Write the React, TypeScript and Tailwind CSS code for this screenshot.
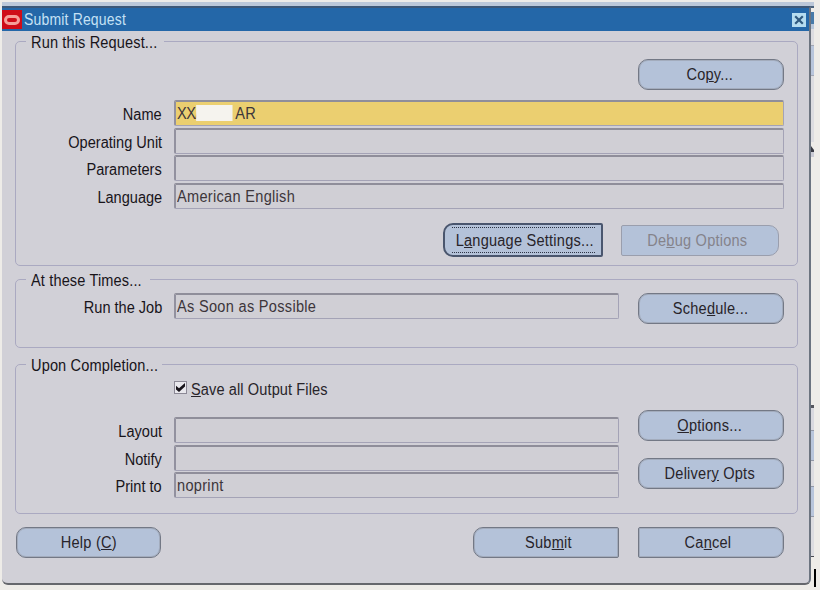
import clsx from "clsx"
import { type ReactNode } from "react"

export default function App() {
  return (
    <div className="flex h-[590px] w-[820px] overflow-hidden bg-[#eeece8] pl-[2px] font-['Liberation_Sans',Arial,sans-serif] text-[16px] leading-[20px] text-[#28242a]">
      <div className="flex w-[809px] flex-col">
        {/* Edge of the parent window above the dialog */}
        <div className="mt-[2px] h-[4px] bg-[#bcc8d9]" />
        <div className="flex h-[579px] flex-col rounded-b-[6px] border-t-2 border-r-2 border-b-2 border-t-[#3d5878] border-r-[#6c7480] border-b-[#65676c] bg-[#d1d0d7]">
          <TitleBar />
          <div className="flex flex-col pr-[11px] pl-[13px]">
            <RequestGroup />
            <TimesGroup />
            <CompletionGroup />
            <Footer />
          </div>
        </div>
      </div>
      <BackgroundStrip />
    </div>
  )
}

function TitleBar() {
  return (
    <div className="flex h-[23px] shrink-0 items-center bg-[#2467a8] pr-[3px] text-[#c5e1f5]">
      <div className="flex h-[19px] w-[20px] items-center justify-center bg-[#cf0d18]">
        <div className="h-[10px] w-[16px] rounded-full border-[3px] border-[#f5a09a]" />
      </div>
      <div className="ml-[2px]">
        <Text className="mt-px origin-left scale-x-[0.874] tracking-[0.2px]">
          Submit Request
        </Text>
      </div>
      <button className="ml-auto flex size-[14px] items-center justify-center bg-[#b5dcf0]">
        <svg viewBox="0 0 10 10" className="size-[10px]">
          <path
            d="M1.2 1.2 8.8 8.8M8.8 1.2 1.2 8.8"
            stroke="#2f597f"
            strokeWidth="2.2"
          />
        </svg>
      </button>
    </div>
  )
}

function RequestGroup() {
  return (
    <Group
      title="Run this Request..."
      className="h-[235px]"
      legendClassName="w-[138px]"
    >
      <div className="flex justify-end pt-[8px]">
        <Button shape="round" textClassName="pr-[2px]">
          Co<u>p</u>y...
        </Button>
      </div>
      <div className="mt-[10px]">
        <Field label="Name" highlighted>
          <span className="tracking-[-0.6px]">XX/</span>
          <span className="relative -top-[2px] -ml-[3px] mr-[3px] inline-block h-[16px] w-[40px] bg-[#f5f3ee] align-[-4px]" />
          AR
        </Field>
        <Field label="Operating Unit" />
        <Field label="Parameters" />
        <Field label="Language">American English</Field>
      </div>
      <div className="mt-[13px] flex items-center justify-end gap-[18px] pr-[5px]">
        <Button
          shape="left"
          className="w-[160px]"
          textClassName="pl-[4px]"
          focused
        >
          L<u>a</u>nguage Settings...
        </Button>
        <Button
          shape="right"
          className="w-[158px]"
          textClassName="pr-[7px]"
          disabled
        >
          De<u>b</u>ug Options
        </Button>
      </div>
    </Group>
  )
}

function TimesGroup() {
  return (
    <Group
      title="At these Times..."
      className="mt-[3px] h-[79px]"
      legendClassName="w-[124px]"
    >
      <div className="flex justify-between pt-[4px]">
        <Field label="Run the Job" short>
          As Soon as Possible
        </Field>
        <Button shape="round" textClassName="pr-[2px]">
          Sche<u>d</u>ule...
        </Button>
      </div>
    </Group>
  )
}

function CompletionGroup() {
  return (
    <Group
      title="Upon Completion..."
      className="mt-[6px] h-[160px]"
      legendClassName="w-[136px]"
    >
      <div className="flex justify-between">
        <div>
          {/* Output checkbox lines up with the left edge of the fields */}
          <label className="mt-[5px] flex h-[20px] items-center pl-[158px]">
            <span className="mb-[4px] flex size-[13px] items-center justify-center border border-[#8c8996] bg-[#e9e8ed]">
              <svg viewBox="0 0 9 9" className="size-[9px]">
                <path d="M0 2.8 3 5.2 9 0V3.6L3 9 0 6.6Z" fill="#17131a" />
              </svg>
            </span>
            <Text className="mt-[2px] ml-[4px] origin-left scale-x-[0.91] tracking-[0.12px]">
              <u>S</u>ave all Output Files
            </Text>
          </label>
          <div className="mt-[18px]">
            <Field label="Layout" short />
            <Field label="Notify" short />
            <Field label="Print to" short>
              noprint
            </Field>
          </div>
        </div>
        <div className="flex flex-col gap-[17px] pt-[36px]">
          <Button shape="round" textClassName="pr-[4px]">
            <u>O</u>ptions...
          </Button>
          <Button shape="round" textClassName="pr-[2px]">
            Deliver<u>y</u> Opts
          </Button>
        </div>
      </div>
    </Group>
  )
}

function Footer() {
  return (
    <div className="mt-[13px] flex gap-[19px] pr-[14px] pl-[1px]">
      <Button shape="round" className="mr-auto w-[145px]">
        Help (<u>C</u>)
      </Button>
      <Button shape="left" textClassName="pl-[5px]">
        Sub<u>m</u>it
      </Button>
      <Button shape="right" textClassName="pr-[7px]">
        Ca<u>n</u>cel
      </Button>
    </div>
  )
}

function Group({
  title,
  className,
  legendClassName,
  children,
}: {
  title: string
  className: string
  legendClassName: string
  children: ReactNode
}) {
  return (
    <fieldset
      className={clsx(
        "min-w-0 rounded-[5px] border border-[#aaa9c1] pr-[13px]",
        className,
      )}
    >
      <legend
        className={clsx("ml-[10px] h-[20px] pl-[5px] text-[#18141a]", legendClassName)}
      >
        <Text className="mt-[2px] origin-left scale-x-[0.91] tracking-[0.15px]">
          {title}
        </Text>
      </legend>
      {children}
    </fieldset>
  )
}

function Field({
  label,
  highlighted = false,
  short = false,
  children,
}: {
  label: string
  highlighted?: boolean
  short?: boolean
  children?: ReactNode
}) {
  return (
    <div className="flex h-[27.5px]">
      <div className="mr-[12px] flex w-[146px] justify-end pt-[5px] text-[#18141a]">
        <Text className="origin-right scale-x-[0.91]">{label}</Text>
      </div>
      <div
        className={clsx(
          "h-[26px] shrink-0 rounded-[2px] border-t-2 border-r border-b border-l-2 border-t-[#8f8e9a] border-r-[#a4a3b6] border-b-[#a4a3b6] border-l-[#92919f] pt-[2px] pl-[1px]",
          short ? "w-[445px]" : "w-[610px]",
          highlighted ? "bg-[#ebcf70]" : "bg-[#d0cfd5]",
        )}
      >
        <Text className="origin-left scale-x-[0.91] tracking-[0.33px] text-[#3d363b]">
          {children}
        </Text>
      </div>
    </div>
  )
}

function Button({
  shape,
  className = "w-[146px]",
  textClassName,
  focused = false,
  disabled = false,
  children,
}: {
  shape: "round" | "left" | "right"
  className?: string
  textClassName?: string
  focused?: boolean
  disabled?: boolean
  children: ReactNode
}) {
  return (
    <button
      disabled={disabled}
      className={clsx(
        "flex shrink-0 items-center justify-center bg-[#b4c2d9]",
        shape === "round" && "rounded-[10px]",
        shape === "left" && "rounded-l-[10px] rounded-r-[2px]",
        shape === "right" && "rounded-l-[2px] rounded-r-[10px]",
        focused ? "h-[34px] border-2 border-[#4a566e]" : "h-[31px] border",
        !focused && !disabled && "border-[#737885] shadow-[inset_0_0_0_1px_#a3acbd]",
        disabled && "border-[#9a9ead] text-[#85838b]",
        className,
      )}
    >
      <span
        className={clsx(
          focused &&
            "flex h-[26px] w-[143px] items-center justify-center border-y border-dotted border-[#2c3344]",
        )}
      >
        <Text
          className={clsx("mt-px scale-x-[0.91] tracking-[0.25px]", textClassName)}
        >
          {children}
        </Text>
      </span>
    </button>
  )
}

/** Slightly condensed label text that stays on one line. */
function Text({
  className,
  children,
}: {
  className: string
  children?: ReactNode
}) {
  return (
    <span
      className={clsx(
        "block whitespace-nowrap [&_u]:underline-offset-1",
        className,
      )}
    >
      {children}
    </span>
  )
}

/** Sliver of the parent window to the right, and the text cursor below it. */
function BackgroundStrip() {
  return (
    <div className="flex w-[7px] flex-col pt-[2px]">
      <div className="h-[4px] w-[3px] bg-[#bcc8d9]" />
      <div className="h-[2px] w-[3px] bg-[#4a617b]" />
      <div className="mt-[4px] h-[12px] w-[3px] bg-[#477aa9]" />
      <div className="h-[5px] w-[3px] bg-[#b7c7db]" />
      <div className="h-[16px] w-[3px] bg-[#dddde1]" />
      <div className="h-[31px] w-[3px] border-y border-[#a3a8b5] bg-[#b9c6dc]" />
      <div className="h-[66px] w-[3px] bg-[#dddde1]" />
      <svg className="h-[10px] w-[3px]" viewBox="0 0 3 10">
        <path d="M0 4 3 8V10H0Z" fill="#383a43" />
      </svg>
      <div className="h-[5px] w-[3px] bg-[#c9cad4]" />
      <div className="mt-[248px] h-[3px] w-[3px] bg-[#55575f]" />
      <div className="h-[22px] w-[3px] bg-[#d9d9df]" />
      <div className="h-[31px] w-[3px] border-y border-[#9298a7] bg-[#b9c6dc]" />
      <div className="h-[25px] w-[3px] bg-[#dddde1]" />
      <div className="h-[31px] w-[3px] border-y border-[#9298a7] bg-[#b9c6dc]" />
      <div className="h-[39px] w-[3px] bg-[#dddde1]" />
      <div className="h-px w-[3px] bg-[#484b53]" />
      <div className="mt-[12px] ml-[3px] h-[18px] w-[2px] bg-black" />
    </div>
  )
}
